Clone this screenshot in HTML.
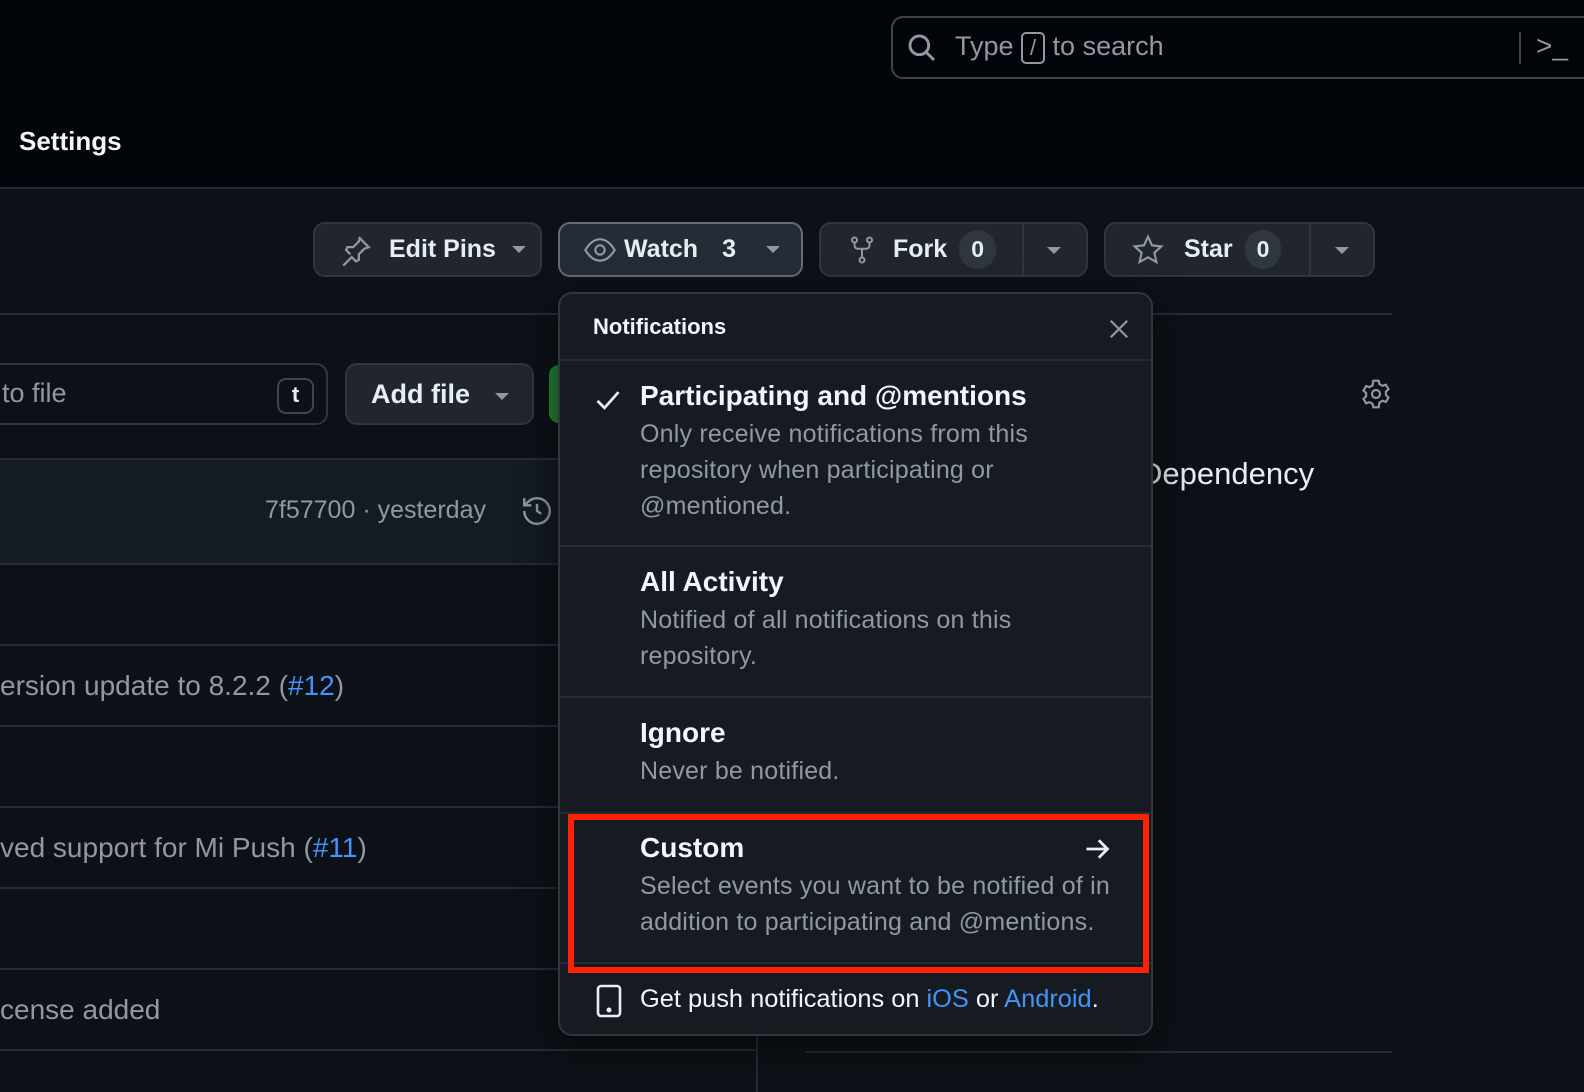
<!DOCTYPE html>
<html><head><meta charset="utf-8">
<style>
*{box-sizing:border-box;margin:0;padding:0}
body{width:1584px;height:1092px;overflow:hidden;background:#0d1117;font-family:"Liberation Sans",sans-serif;color:#e6edf3;position:relative}
.abs{position:absolute}
.hdr{left:0;top:0;width:1584px;height:189px;background:#010409;border-bottom:2px solid #262c36}
.btn{position:absolute;top:222px;height:55px;border:2px solid #30363d;border-radius:12px;background:#21262d;color:#e6edf3;font-size:25px;font-weight:bold;display:flex;align-items:center}
.cnt{background:#30363d;border-radius:20px;padding:6px 12px;font-size:23px}
.caret{width:0;height:0;border-left:7px solid transparent;border-right:7px solid transparent;border-top:7px solid #9198a1;display:inline-block}
.line{position:absolute;height:2px;background:#262c36}
.row{position:absolute;left:0;width:558px;font-size:28px;color:#9198a1}
.pop{left:558px;top:292px;width:595px;height:744px;background:#161b22;border:2px solid #30363d;border-radius:14px;overflow:hidden;box-shadow:0 10px 40px rgba(0,0,0,.6)}
.it{position:absolute;left:80px;width:485px}
.t{font-size:28px;font-weight:bold;color:#f0f6fc}
.d{font-size:25px;letter-spacing:0.2px;color:#9198a1;line-height:36px;margin-top:4px}
.sep{position:absolute;left:0;right:0;height:2px;background:#262c36}
a{color:#4493f8;text-decoration:none}
</style></head><body>
<div class="abs hdr"></div>
<div class="abs" style="left:891px;top:16px;width:720px;height:63px;border:2px solid #3d444d;border-radius:12px"></div>
<svg class="abs" style="left:906px;top:32px" width="32" height="32" viewBox="0 0 24 24" fill="none" stroke="#9198a1" stroke-width="2.2"><circle cx="10" cy="10" r="7"/><path d="M15 15l6 6"/></svg>
<div class="abs" style="left:955px;top:31px;font-size:27px;color:#9198a1">Type <span style="display:inline-block;border:2px solid #9198a1;border-radius:5px;width:24px;height:32px;text-align:center;font-size:22px;line-height:28px;vertical-align:middle">/</span> to search</div>
<div class="abs" style="left:1519px;top:32px;width:2px;height:32px;background:#3d444d"></div>
<div class="abs" style="left:1536px;top:30px;font-size:28px;color:#9198a1">&gt;_</div>
<div class="abs" style="left:19px;top:126px;font-size:26px;font-weight:bold;color:#f0f6fc">Settings</div>

<div class="btn" style="left:313px;width:229px;padding-left:24px">
<svg width="34" height="34" viewBox="0 0 24 24" fill="none" stroke="#9198a1" stroke-width="1.6"><path d="M14 3l7 7-3 1-4 4 0 4-2 1-3-3-6 6M8 15l-3-3 1-2 4 0 4-4 1-3"/></svg>
<span style="margin-left:16px">Edit Pins</span><span class="caret" style="margin-left:16px"></span></div>
<div class="btn" style="left:558px;width:245px;padding-left:24px;border-color:#656c76;background:#262c36">
<svg width="32" height="32" viewBox="0 0 24 24" fill="none" stroke="#9198a1" stroke-width="1.6"><path d="M1 12c3-5 7-8 11-8s8 3 11 8c-3 5-7 8-11 8s-8-3-11-8z"/><circle cx="12" cy="12" r="3.5"/></svg>
<span style="margin-left:8px">Watch</span><span style="margin-left:24px">3</span><span class="caret" style="margin-left:30px"></span></div>
<div class="btn" style="left:819px;width:269px;padding-left:26px">
<svg width="30" height="34" viewBox="0 0 24 24" fill="none" stroke="#9198a1" stroke-width="1.6"><circle cx="6" cy="4" r="2"/><circle cx="18" cy="4" r="2"/><circle cx="12" cy="20" r="2"/><path d="M6 6v2c0 2 1 3 3 3h6c2 0 3-1 3-3V6M12 11v7"/></svg>
<span style="margin-left:16px">Fork</span><span class="cnt" style="margin-left:12px">0</span>
<span style="position:absolute;left:201px;top:0;width:2px;height:51px;background:#30363d"></span><span class="caret" style="position:absolute;left:226px;top:23px"></span></div>
<div class="btn" style="left:1104px;width:271px;padding-left:26px">
<svg width="32" height="32" viewBox="0 0 24 24" fill="none" stroke="#9198a1" stroke-width="1.6"><path d="M12 2l3 6.5 7 .8-5.2 4.8 1.5 7L12 17.5 5.7 21l1.5-7L2 9.3l7-.8z"/></svg>
<span style="margin-left:20px">Star</span><span class="cnt" style="margin-left:12px">0</span>
<span style="position:absolute;left:203px;top:0;width:2px;height:51px;background:#30363d"></span><span class="caret" style="position:absolute;left:229px;top:23px"></span></div>

<div class="line" style="left:0;top:313px;width:1392px"></div>
<div class="abs" style="left:-20px;top:363px;width:348px;height:62px;border:2px solid #30363d;border-radius:12px;background:#0d1117"></div>
<div class="abs" style="left:2px;top:378px;font-size:27px;color:#9198a1">to file</div>
<div class="abs" style="left:277px;top:378px;width:37px;height:36px;border:2px solid #3d444d;border-radius:9px;text-align:center;font-size:22px;font-weight:bold;line-height:30px;color:#e6edf3">t</div>
<div class="abs" style="left:345px;top:363px;width:189px;height:62px;border:2px solid #30363d;border-radius:12px;background:#21262d;font-size:27px;font-weight:bold;padding:14px 0 0 24px">Add file<span class="caret" style="position:absolute;left:148px;top:28px"></span></div>
<div class="abs" style="left:549px;top:365px;width:20px;height:58px;background:#238636;border-radius:10px 0 0 10px"></div>
<svg class="abs" style="left:1360px;top:378px" width="32" height="32" viewBox="0 0 24 24" fill="none" stroke="#9198a1" stroke-width="1.6"><circle cx="12" cy="12" r="3"/><path d="M10 2h4l.6 2.6 2.3 1.3 2.5-.9 2 3.4-2 1.8v2.6l2 1.8-2 3.4-2.5-.9-2.3 1.3L14 22h-4l-.6-2.6-2.3-1.3-2.5.9-2-3.4 2-1.8v-2.6l-2-1.8 2-3.4 2.5.9 2.3-1.3z"/></svg>
<div class="abs" style="left:1140px;top:456px;font-size:31px;color:#e6edf3">Dependency</div>

<div class="abs" style="left:0;top:458px;width:560px;height:105px;background:#151b23;border-top:2px solid #262c36"></div>
<div class="abs" style="left:265px;top:496px;font-size:25px;color:#9198a1">7f57700 · yesterday</div>
<svg class="abs" style="left:520px;top:494px" width="34" height="34" viewBox="0 0 24 24" fill="none" stroke="#9198a1" stroke-width="1.7"><path d="M3 12a9 9 0 1 0 3-6.7L3 8M3 3v5h5M12 7v5l3 2"/></svg>
<div class="line" style="left:0;top:563px;width:560px"></div>
<div class="line" style="left:0;top:644px;width:560px"></div>
<div class="row" style="top:670px">ersion update to 8.2.2 (<a>#12</a>)</div>
<div class="line" style="left:0;top:725px;width:560px"></div>
<div class="line" style="left:0;top:806px;width:560px"></div>
<div class="row" style="top:832px">ved support for Mi Push (<a>#11</a>)</div>
<div class="line" style="left:0;top:887px;width:560px"></div>
<div class="line" style="left:0;top:968px;width:560px"></div>
<div class="row" style="top:994px">cense added</div>
<div class="line" style="left:0;top:1049px;width:757px"></div>
<div class="abs" style="left:756px;top:1036px;width:2px;height:56px;background:#262c36"></div>
<div class="line" style="left:805px;top:1051px;width:587px"></div>

<div class="abs pop">
 <div class="abs" style="left:33px;top:20px;font-size:22px;font-weight:bold;color:#f0f6fc">Notifications</div>
 <svg class="abs" style="left:548px;top:24px" width="22" height="22" viewBox="0 0 16 16" stroke="#9198a1" stroke-width="1.6"><path d="M2 2l12 12M14 2L2 14"/></svg>
 <div class="sep" style="top:65px"></div>
 <svg class="abs" style="left:34px;top:92px" width="28" height="28" viewBox="0 0 16 16" fill="none" stroke="#e6edf3" stroke-width="1.6"><path d="M2 8.5l4 4 8-9"/></svg>
 <div class="it" style="top:86px"><div class="t">Participating and @mentions</div><div class="d">Only receive notifications from this<br>repository when participating or<br>@mentioned.</div></div>
 <div class="sep" style="top:251px"></div>
 <div class="it" style="top:272px"><div class="t">All Activity</div><div class="d">Notified of all notifications on this<br>repository.</div></div>
 <div class="sep" style="top:402px"></div>
 <div class="it" style="top:423px"><div class="t">Ignore</div><div class="d">Never be notified.</div></div>
 <div class="sep" style="top:518px"></div>
 <div class="it" style="top:538px"><div class="t">Custom</div><div class="d">Select events you want to be notified of in<br>addition to participating and @mentions.</div></div>
 <svg class="abs" style="left:523px;top:541px" width="28" height="28" viewBox="0 0 16 16" fill="none" stroke="#e6edf3" stroke-width="1.6"><path d="M2 8h12M9 3l5 5-5 5"/></svg>
 <div class="sep" style="top:668px"></div>
 <svg class="abs" style="left:36px;top:690px" width="26" height="34" viewBox="0 0 13 17" fill="none" stroke="#e6edf3" stroke-width="1.3"><rect x="1" y="1" width="11" height="15" rx="1.5"/><circle cx="6.5" cy="13" r=".6" fill="#e6edf3"/></svg>
 <div class="abs" style="left:80px;top:691px;font-size:25.4px;color:#f0f6fc">Get push notifications on <a>iOS</a> or <a>Android</a>.</div>
</div>
<div class="abs" style="left:568px;top:814px;width:581px;height:159px;border:6px solid #ff2200"></div>
</body></html>
